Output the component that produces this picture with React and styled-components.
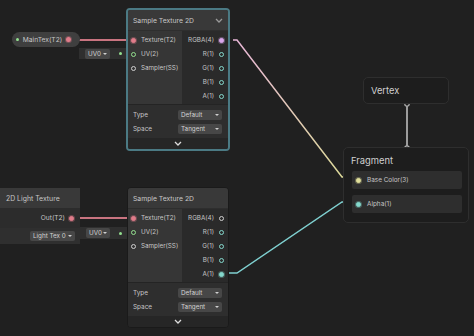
import React from 'react';
import styled, { createGlobalStyle } from 'styled-components';

const GlobalStyle = createGlobalStyle`
    html, body {
        margin: 0;
        padding: 0;
        background: #202020;
    }
`;

const portColors = {
    tex: '#e07c8a',
    uv: '#93e08f',
    ss: '#cfcfcf',
    vec1: '#84d8cc',
    rgba: '#d9a6ec',
    col: '#e0df9a',
    gray: '#a8a8a8',
};

const Canvas = styled.div`
    position: relative;
    width: 474px;
    height: 336px;
    background: #202020;
    overflow: hidden;
    font-family: Inter, 'Noto Sans', 'Liberation Sans', sans-serif;
    color: #c6c6c6;
`;

const Wires = styled.svg`
    position: absolute;
    left: 0;
    top: 0;
    pointer-events: none;
`;

const Node = styled.div`
    position: absolute;
    left: ${(p) => p.$x}px;
    top: ${(p) => p.$y}px;
    width: ${(p) => p.$w}px;
    box-sizing: border-box;
    border: ${(p) => (p.$selected ? '2px solid #4b7a84' : '1px solid #1a1a1a')};
    border-radius: 4px;
    background: #2b2b2b;
    overflow: hidden;
`;

const Header = styled.div`
    height: 20px;
    display: flex;
    align-items: center;
    justify-content: space-between;
    padding: 0 5px 0 5px;
    background: #393939;
    font-size: 6.8px;
    color: #c8c8c8;
`;

const Ports = styled.div`
    display: grid;
    grid-template-columns: 54px 1fr;
    height: 74px;
    border-top: 1px solid #2e2e2e;
    box-sizing: border-box;
`;

const Column = styled.div`
    padding-top: 2px;
    background: ${(p) => (p.$side === 'in' ? '#363636' : '#2a2a2a')};
`;

const PortRow = styled.div`
    height: 14px;
    display: flex;
    align-items: center;
    gap: 5px;
    font-size: 6.3px;
    justify-content: ${(p) => (p.$side === 'in' ? 'flex-start' : 'flex-end')};
    padding: ${(p) => (p.$side === 'in' ? '0 0 0 3px' : '0 4px 0 0')};
    white-space: nowrap;
`;

const Dot = styled.span`
    flex: none;
    width: ${(p) => (p.$small ? 3 : 5)}px;
    height: ${(p) => (p.$small ? 3 : 5)}px;
    border-radius: 50%;
    box-sizing: border-box;
    border: ${(p) => (p.$small ? 0 : 1.2)}px solid ${(p) => portColors[p.$kind]};
    background: ${(p) => (p.$filled ? portColors[p.$kind] : 'transparent')};
    box-shadow: ${(p) => (p.$filled && !p.$small ? `0 0 0 1px ${portColors[p.$kind]}55` : 'none')};
`;

const Props = styled.div`
    background: #2e2e2e;
    border-top: 1px solid #242424;
    padding: 3px 6px 2px 5px;
`;

const PropRow = styled.div`
    height: 14px;
    display: flex;
    align-items: center;
    justify-content: space-between;
    font-size: 6.4px;
`;

const Dropdown = styled.div`
    width: ${(p) => p.$w}px;
    height: 10px;
    box-sizing: border-box;
    display: flex;
    align-items: center;
    justify-content: space-between;
    padding: 0 3px;
    background: #474747;
    border-radius: 2px;
    font-size: 6.3px;
    color: #d2d2d2;
    white-space: nowrap;
`;

const Arrow = styled.span`
    width: 0;
    height: 0;
    border-left: 2px solid transparent;
    border-right: 2px solid transparent;
    border-top: 2.5px solid #d0d0d0;
`;

const Footer = styled.div`
    height: 11px;
    display: flex;
    align-items: center;
    justify-content: center;
    background: #262626;
`;

const PropertyPill = styled.div`
    position: absolute;
    left: 12px;
    top: 32px;
    width: 68px;
    height: 15px;
    box-sizing: border-box;
    border-radius: 8px;
    background: #3f3f3f;
    display: flex;
    align-items: center;
    gap: 4px;
    padding: 0 9px 0 4px;
    font-size: 6.7px;
    span {
        flex: 1;
    }
`;

const InlineField = styled.div`
    position: absolute;
    left: ${(p) => p.$x}px;
    top: ${(p) => p.$y}px;
    width: ${(p) => p.$w}px;
    height: ${(p) => p.$h}px;
    box-sizing: border-box;
    display: flex;
    align-items: center;
    justify-content: ${(p) => (p.$end ? 'flex-end' : 'flex-start')};
    gap: 9px;
    padding: 0 5px 0 6px;
    background: #2f2f2f;
`;

const LightNode = styled.div`
    position: absolute;
    left: -4px;
    top: 188px;
    width: 84px;
    background: #2b2b2b;
`;

const LightHeader = styled.div`
    height: 20px;
    display: flex;
    align-items: center;
    padding-left: 10px;
    background: #393939;
    font-size: 6.9px;
`;

const LightBody = styled.div`
    height: 20px;
    display: flex;
    align-items: center;
    justify-content: flex-end;
    gap: 4px;
    padding-right: 6px;
    font-size: 6.6px;
    background: #2c2c2c;
`;

const MasterBlock = styled.div`
    position: absolute;
    left: ${(p) => p.$x}px;
    top: ${(p) => p.$y}px;
    width: ${(p) => p.$w}px;
    height: ${(p) => p.$h}px;
    box-sizing: border-box;
    border: 1px solid #2e2e2e;
    border-radius: 5px;
    background: #1d1d1d;
    padding: 6px 6px 0 7px;
`;

const BlockTitle = styled.div`
    font-size: ${(p) => p.$size}px;
    color: #d0d0d0;
    line-height: 13px;
    margin-bottom: 4px;
`;

const BlockRow = styled.div`
    height: 18px;
    margin: 0 0 6px 1px;
    display: flex;
    align-items: center;
    gap: 6px;
    padding-left: 4px;
    background: #2e2e2e;
    border-radius: 2px;
    font-size: 6.4px;
`;

const Chevron = ({ color = '#dcdcdc' }) => (
    <svg width="8" height="5" viewBox="0 0 8 5">
        <path d="M1 1 L4 4 L7 1" fill="none" stroke={color} strokeWidth="1.3" />
    </svg>
);

const inputs = [
    { label: 'Texture(T2)', kind: 'tex', filled: true },
    { label: 'UV(2)', kind: 'uv' },
    { label: 'Sampler(SS)', kind: 'ss' },
];

const SampleTexture = ({ x, y, w, selected, outputs }) => (
    <Node $x={x} $y={y} $w={w} $selected={selected}>
        <Header>
            <span>Sample Texture 2D</span>
            {selected && <Chevron color="#9a9a9a" />}
        </Header>
        <Ports>
            <Column $side="in">
                {inputs.map((p) => (
                    <PortRow $side="in" key={p.label}>
                        <Dot $kind={p.kind} $filled={p.filled} />
                        {p.label}
                    </PortRow>
                ))}
            </Column>
            <Column $side="out">
                {outputs.map((p) => (
                    <PortRow $side="out" key={p.label}>
                        {p.label}
                        <Dot $kind={p.kind} $filled={p.filled} />
                    </PortRow>
                ))}
            </Column>
        </Ports>
        <Props>
            <PropRow>
                Type
                <Dropdown $w={44}>
                    Default
                    <Arrow />
                </Dropdown>
            </PropRow>
            <PropRow>
                Space
                <Dropdown $w={44}>
                    Tangent
                    <Arrow />
                </Dropdown>
            </PropRow>
        </Props>
        <Footer>
            <Chevron />
        </Footer>
    </Node>
);

const App = () => {
    const topOutputs = [
        { label: 'RGBA(4)', kind: 'rgba', filled: true },
        { label: 'R(1)', kind: 'vec1' },
        { label: 'G(1)', kind: 'vec1' },
        { label: 'B(1)', kind: 'vec1' },
        { label: 'A(1)', kind: 'vec1' },
    ];
    const bottomOutputs = [
        { label: 'RGBA(4)', kind: 'ss' },
        { label: 'R(1)', kind: 'vec1' },
        { label: 'G(1)', kind: 'vec1' },
        { label: 'B(1)', kind: 'vec1' },
        { label: 'A(1)', kind: 'vec1', filled: true },
    ];

    return (
        <>
            <GlobalStyle />
            <Canvas>
                <Wires width="474" height="336" viewBox="0 0 474 336">
                    <defs>
                        <linearGradient id="rgbaWire" x1="233" y1="40" x2="357" y2="177" gradientUnits="userSpaceOnUse">
                            <stop offset="0" stopColor="#e8b6d8" />
                            <stop offset="1" stopColor="#dcdc96" />
                        </linearGradient>
                    </defs>
                    <path d="M72 40 L134 40" stroke="#c97480" strokeWidth="2" />
                    <path d="M72 218 L134 218" stroke="#c97480" strokeWidth="2" />
                    <path d="M118 53 L134 53" stroke="#8fd88b" strokeWidth="1.5" />
                    <path d="M118 231 L134 231" stroke="#8fd88b" strokeWidth="1.5" />
                    <path d="M233 40 L237 40 L342 177 L357 177" fill="none" stroke="url(#rgbaWire)" strokeWidth="1.5" />
                    <path d="M223 273 L237 273 L342 202 L357 202" fill="none" stroke="#7fd0d0" strokeWidth="1.5" />
                    <path d="M407 105 L407 147" stroke="#9c9c9c" strokeWidth="2" />
                    <circle cx="407" cy="104" r="2.2" fill="#1d1d1d" stroke="#b0b0b0" strokeWidth="1.2" />
                    <circle cx="407" cy="148" r="2.2" fill="#1d1d1d" stroke="#b0b0b0" strokeWidth="1.2" />
                </Wires>

                <PropertyPill>
                    <Dot $kind="uv" $filled $small />
                    <span>MainTex(T2)</span>
                    <Dot $kind="tex" $filled />
                </PropertyPill>
                <InlineField $x={79} $y={48} $w={48} $h={11}>
                    <Dropdown $w={26}>
                        UV0
                        <Arrow />
                    </Dropdown>
                    <Dot $kind="uv" $filled $small />
                </InlineField>

                <SampleTexture x={126} y={8} w={104} selected outputs={topOutputs} />

                <LightNode>
                    <LightHeader>2D Light Texture</LightHeader>
                    <LightBody>
                        Out(T2)
                        <Dot $kind="tex" $filled />
                    </LightBody>
                </LightNode>
                <InlineField $x={0} $y={228} $w={80} $h={16} $end>
                    <Dropdown $w={45}>
                        Light Tex 0
                        <Arrow />
                    </Dropdown>
                </InlineField>
                <InlineField $x={80} $y={227} $w={47} $h={12}>
                    <Dropdown $w={27}>
                        UV0
                        <Arrow />
                    </Dropdown>
                    <Dot $kind="uv" $filled $small />
                </InlineField>

                <SampleTexture x={127} y={187} w={102} outputs={bottomOutputs} />

                <MasterBlock $x={363} $y={77} $w={86} $h={27}>
                    <BlockTitle $size={9.3}>Vertex</BlockTitle>
                </MasterBlock>
                <MasterBlock $x={343} $y={147} $w={126} $h={76}>
                    <BlockTitle $size={9.4}>Fragment</BlockTitle>
                    <BlockRow>
                        <Dot $kind="col" $filled />
                        Base Color(3)
                    </BlockRow>
                    <BlockRow>
                        <Dot $kind="vec1" $filled />
                        Alpha(1)
                    </BlockRow>
                </MasterBlock>
            </Canvas>
        </>
    );
};

export default App;
